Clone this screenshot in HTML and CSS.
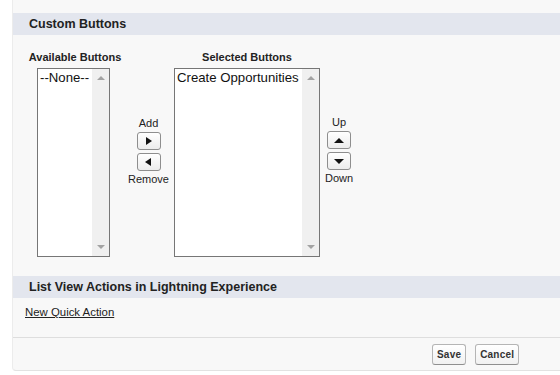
FILE: index.html
```html
<!DOCTYPE html>
<html>
<head>
<meta charset="utf-8">
<link rel="stylesheet" href="styles.css">
</head>
<body>
<div class="panel">
  <div class="section-head">Custom Buttons</div>
  <div class="dueling">
    <div class="col col-avail">
      <div class="col-label">Available Buttons</div>
      <div class="listbox lb-avail">
        <div class="lb-items"><div class="lb-item">--None--</div></div>
        <div class="lb-scroll"><span class="sb-up"></span><span class="sb-down"></span></div>
      </div>
    </div>
    <div class="col col-arrows">
      <div class="arrow-label">Add</div>
      <div class="arrow-btn"><span class="tri-right"></span></div>
      <div class="arrow-btn"><span class="tri-left"></span></div>
      <div class="arrow-label">Remove</div>
    </div>
    <div class="col col-sel">
      <div class="col-label">Selected Buttons</div>
      <div class="listbox lb-sel">
        <div class="lb-items"><div class="lb-item">Create Opportunities</div></div>
        <div class="lb-scroll"><span class="sb-up"></span><span class="sb-down"></span></div>
      </div>
    </div>
    <div class="col col-order">
      <div class="arrow-label">Up</div>
      <div class="arrow-btn"><span class="tri-up"></span></div>
      <div class="arrow-btn"><span class="tri-down"></span></div>
      <div class="arrow-label">Down</div>
    </div>
  </div>
  <div class="section-head">List View Actions in Lightning Experience</div>
  <div class="actions-body">
    <a class="link" href="#">New Quick Action</a>
  </div>
  <div class="footer">
    <button class="btn">Save</button>
    <button class="btn">Cancel</button>
  </div>
</div>
</body>
</html>
```
FILE: styles.css
```css
html, body {
  margin: 0;
  padding: 0;
  background: #ffffff;
  font-family: "Liberation Sans", Arial, sans-serif;
  color: #222222;
}
.panel {
  margin: 0 -20px 0 12px;
  padding-top: 13px;
  background: #f8f8f8;
  border-left: 1px solid #ececec;
  border-bottom: 1px solid #e2e2e2;
  border-bottom-left-radius: 4px;
  height: 371px;
  box-sizing: border-box;
}
.section-head {
  height: 22px;
  line-height: 22px;
  background: #e3e6ee;
  padding-left: 16px;
  font-size: 12.5px;
  font-weight: bold;
  color: #222;
}
.dueling {
  display: flex;
  align-items: flex-start;
  padding: 15px 0 19px 14px;
}
.col {
  display: flex;
  flex-direction: column;
  align-items: center;
  flex-shrink: 0;
}
.col-avail { width: 96px; }
.col-arrows { width: 51px; padding-top: 66px; }
.col-sel { width: 146px; }
.col-order { width: 38px; padding-top: 65px; }
.col-label {
  font-size: 11px;
  font-weight: bold;
  line-height: 14px;
  height: 14px;
  margin-bottom: 4px;
  color: #222;
  white-space: nowrap;
}
.listbox {
  display: flex;
  height: 189px;
  border: 1px solid #767676;
  background: #ffffff;
  box-sizing: border-box;
}
.lb-avail { width: 73px; align-self: flex-start; margin-left: 10px; }
.lb-sel { width: 146px; }
.lb-items {
  flex: 1;
  padding: 1px 0 0 2px;
  font-size: 13.2px;
  line-height: 15px;
  color: #111;
  white-space: nowrap;
  overflow: hidden;
}
.lb-scroll {
  width: 17px;
  background: #f0f0f0;
  display: flex;
  flex-direction: column;
  justify-content: space-between;
  align-items: center;
  padding: 7px 0 7px;
}
.sb-up {
  width: 0; height: 0;
  border-left: 4px solid transparent;
  border-right: 4px solid transparent;
  border-bottom: 4px solid #a3a3a3;
}
.sb-down {
  width: 0; height: 0;
  border-left: 4px solid transparent;
  border-right: 4px solid transparent;
  border-top: 4px solid #a3a3a3;
}
.arrow-label {
  font-size: 11px;
  line-height: 14px;
  color: #222;
}
.arrow-btn {
  width: 24px;
  height: 18px;
  flex-shrink: 0;
  box-sizing: border-box;
  border: 1px solid #8e8e8e;
  border-radius: 3px;
  background: linear-gradient(#ffffff, #ececec);
  display: flex;
  align-items: center;
  justify-content: center;
  margin: 2px 0 1px;
}
.tri-right {
  width: 0; height: 0;
  border-top: 4.5px solid transparent;
  border-bottom: 4.5px solid transparent;
  border-left: 6px solid #111;
  margin-left: 1px;
}
.tri-left {
  width: 0; height: 0;
  border-top: 4.5px solid transparent;
  border-bottom: 4.5px solid transparent;
  border-right: 6px solid #111;
  margin-right: 1px;
}
.tri-up {
  width: 0; height: 0;
  border-left: 5px solid transparent;
  border-right: 5px solid transparent;
  border-bottom: 5px solid #111;
}
.tri-down {
  width: 0; height: 0;
  border-left: 5px solid transparent;
  border-right: 5px solid transparent;
  border-top: 5px solid #111;
}
.actions-body {
  height: 39px;
  padding: 4px 0 0 12px;
  box-sizing: border-box;
}
.link {
  font-size: 11.4px;
  line-height: 14px;
  color: #222;
  text-decoration: underline;
}
.footer {
  border-top: 1px solid #dedede;
  padding: 6px 0 0 419px;
  display: flex;
  gap: 9px;
}
.btn {
  height: 21px;
  padding: 0 4px;
  font-family: "Liberation Sans", Arial, sans-serif;
  font-size: 10px;
  font-weight: bold;
  color: #333;
  border: 1px solid #b5b5b5;
  border-bottom-color: #8f8f8f;
  border-radius: 3px;
  background: linear-gradient(#ffffff, #f1f1f1);
  letter-spacing: 0.2px;
}
```
